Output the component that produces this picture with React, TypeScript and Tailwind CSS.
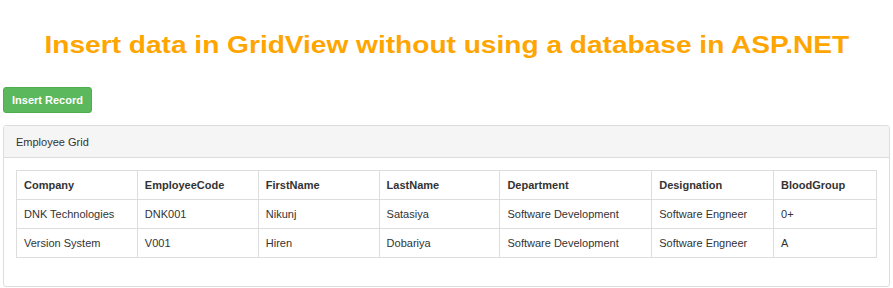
import type { JSX } from "react";

const columns = [
  { key: "company", label: "Company", width: "w-[121px]" },
  { key: "code", label: "EmployeeCode", width: "w-[121px]" },
  { key: "first", label: "FirstName", width: "w-[121px]" },
  { key: "last", label: "LastName", width: "w-[121px]" },
  { key: "dept", label: "Department", width: "w-[152px]" },
  { key: "desig", label: "Designation", width: "w-[122px]" },
  { key: "blood", label: "BloodGroup", width: "w-[103px]" },
] as const;

type Row = Record<(typeof columns)[number]["key"], string>;

const rows: Row[] = [
  {
    company: "DNK Technologies",
    code: "DNK001",
    first: "Nikunj",
    last: "Satasiya",
    dept: "Software Development",
    desig: "Software Engneer",
    blood: "0+",
  },
  {
    company: "Version System",
    code: "V001",
    first: "Hiren",
    last: "Dobariya",
    dept: "Software Development",
    desig: "Software Engneer",
    blood: "A",
  },
];

export default function App(): JSX.Element {
  return (
    <div className="h-[288px] w-[893px] bg-white font-['Liberation_Sans',Arial,sans-serif] text-[#333]">
      {/* page title — the source font renders wider than Arial bold */}
      <h1 className="flex h-[87px] items-start justify-center pt-[30px] text-[24px] font-bold leading-[30px] text-[#ffa500]">
        <span className="inline-block scale-x-[1.17] whitespace-nowrap">
          Insert data in GridView without using a database in ASP.NET
        </span>
      </h1>

      <div className="px-[3px]">
        <button
          type="button"
          className="h-[26px] rounded-[3px] border border-[#4cae4c] bg-[#5cb85c] px-[8px] text-[11px] font-bold text-white"
        >
          Insert Record
        </button>

        {/* panel */}
        <section className="mt-[12px] h-[162px] rounded-[3px] border border-[#ddd]">
          <header className="flex h-[32px] items-center border-b border-[#ddd] bg-[#f5f5f5] px-[12px] text-[11px] text-[#333]">
            Employee Grid
          </header>
          <div className="px-[12px] pt-[12px]">
            <table className="border-collapse text-[11px]">
              <thead>
                <tr className="h-[29px]">
                  {columns.map((c) => (
                    <th
                      key={c.key}
                      className={`${c.width} border border-[#ddd] px-[7px] text-left font-bold`}
                    >
                      {c.label}
                    </th>
                  ))}
                </tr>
              </thead>
              <tbody>
                {rows.map((r) => (
                  <tr key={r.code} className="h-[29px]">
                    {columns.map((c) => (
                      <td key={c.key} className="border border-[#ddd] px-[7px]">
                        {r[c.key]}
                      </td>
                    ))}
                  </tr>
                ))}
              </tbody>
            </table>
          </div>
        </section>
      </div>
    </div>
  );
}
